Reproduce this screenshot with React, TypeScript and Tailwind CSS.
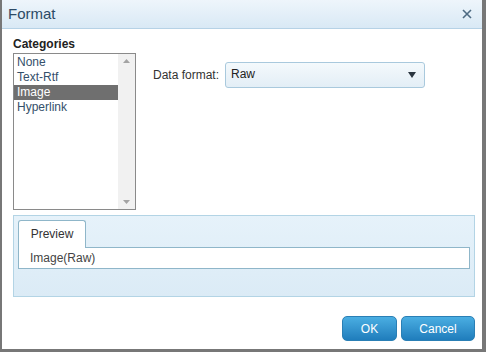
export default function App() {
  const items = ["None", "Text-Rtf", "Image", "Hyperlink"];
  return (
    <div
      className="flex h-[352px] w-[486px] flex-col border-b-[3px] border-l-2 border-r-[4px] border-[#777] bg-white text-[12px] text-[#333]"
      style={{ fontFamily: '"Liberation Sans", Arial, sans-serif' }}
    >
      {/* Title bar */}
      <div className="flex h-[29px] shrink-0 items-center justify-between border-b border-[#b6d2e6] bg-gradient-to-b from-[#eef5fb] to-[#d9e9f5] pl-[6px] pr-[10px]">
        <span className="text-[15px] text-[#2c4a66]">Format</span>
        <svg viewBox="0 0 10 10" className="h-[10px] w-[10px]" aria-hidden="true">
          <path d="M1 1 L9 9 M9 1 L1 9" stroke="#4d6a82" strokeWidth={1.6} />
        </svg>
      </div>

      {/* Body */}
      <div className="flex flex-1 flex-col pl-[11px] pr-[5px] pt-[8px]">
        <div className="flex">
          <div className="flex flex-col">
            <span className="font-bold leading-[14px] text-[#222]">Categories</span>
            <div className="mt-[2px] flex h-[157px] w-[123px] border border-[#8a8a8a]">
              <div className="flex flex-1 flex-col pt-[1px]">
                {items.map((it) => (
                  <div
                    key={it}
                    className={
                      it === "Image"
                        ? "bg-[#6f6f6f] pl-[3px] leading-[15px] text-white"
                        : "pl-[3px] leading-[15px] text-[#35506a]"
                    }
                  >
                    {it}
                  </div>
                ))}
              </div>
              <div className="flex w-[17px] flex-col items-center justify-between bg-[#f1f1f1] py-[5px]">
                <svg viewBox="0 0 7 4" className="h-[4px] w-[7px]" aria-hidden="true">
                  <path d="M0 4 L3.5 0 L7 4 Z" fill="#a3a3a3" />
                </svg>
                <svg viewBox="0 0 7 4" className="h-[4px] w-[7px]" aria-hidden="true">
                  <path d="M0 0 L3.5 4 L7 0 Z" fill="#a3a3a3" />
                </svg>
              </div>
            </div>
          </div>

          <div className="ml-[17px] mt-[25px] flex h-[26px] items-center">
            <span className="text-[#333]">Data format:</span>
            <div className="ml-[6px] flex h-[26px] w-[200px] items-center justify-between rounded-[3px] border border-[#a9c9dd] bg-gradient-to-b from-[#f4f9fc] to-[#e3eef6] pl-[5px] pr-[8px]">
              <span className="-mt-[3px] text-[#222]">Raw</span>
              <svg viewBox="0 0 8 6" className="h-[6px] w-[8px]" aria-hidden="true">
                <path d="M0 0 L8 0 L4 6 Z" fill="#2a3540" />
              </svg>
            </div>
          </div>
        </div>

        {/* Preview panel */}
        <div className="mt-[5px] flex h-[82px] w-[462px] flex-col border border-[#b3d4e5] bg-gradient-to-b from-[#e6f2fa] to-[#dbebf6] px-[4px] pt-[4px]">
          <div className="flex">
            <div className="relative z-10 -mb-px flex h-[28px] w-[68px] items-center justify-center rounded-t-[3px] border border-b-0 border-[#8fb6c9] bg-white pb-[2px] text-[#333]">
              Preview
            </div>
          </div>
          <div className="flex h-[22px] items-center border border-[#8fb6c9] bg-white pl-[11px] text-[#444]">
            Image(Raw)
          </div>
        </div>

        {/* Buttons */}
        <div className="mt-[19px] flex w-[462px] justify-end gap-[4px]">
          <button className="h-[25px] w-[55px] rounded-[5px] border border-[#2a7fb5] bg-gradient-to-b from-[#4aaee2] to-[#1f7dbc] text-white">
            OK
          </button>
          <button className="h-[25px] w-[74px] rounded-[5px] border border-[#2a7fb5] bg-gradient-to-b from-[#4aaee2] to-[#1f7dbc] text-white">
            Cancel
          </button>
        </div>
      </div>
    </div>
  );
}
